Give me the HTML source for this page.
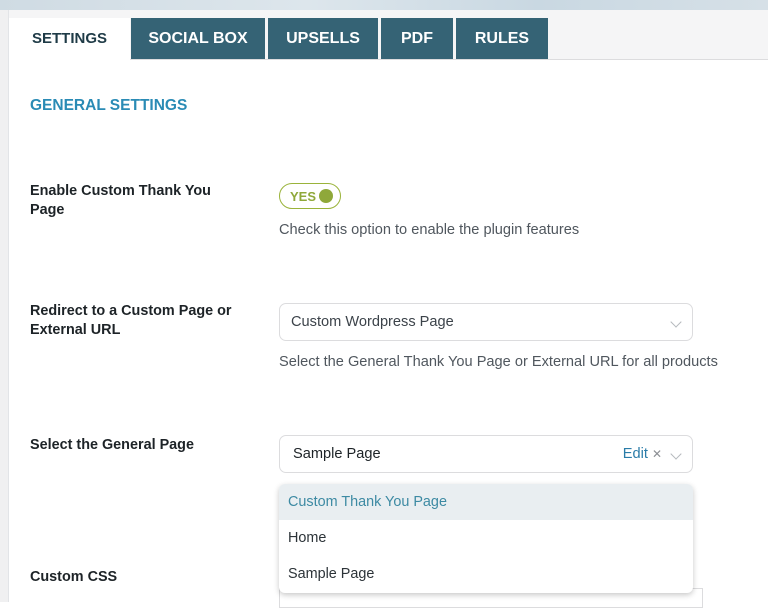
<!DOCTYPE html>
<html><head><style>
*{margin:0;padding:0;box-sizing:border-box}
body{width:768px;height:602px;overflow:hidden;background:#fff;font-family:"Liberation Sans",sans-serif;position:relative}
.top{position:absolute;left:0;top:0;width:768px;height:10px;background:linear-gradient(90deg,#cfdbe3,#dde6ec 40%,#c9d8e2 70%,#d6e0e7)}
.strip{position:absolute;left:0;top:10px;width:9px;height:592px;background:#f0f0f1;border-right:1px solid #e2e4e7}
.tabbar{position:absolute;left:9px;top:10px;width:759px;height:50px;background:#f5f5f6;border-bottom:1px solid #dcdcde}
.tab{position:absolute;top:18px;height:41px;background:#356375;color:#fff;font-weight:bold;font-size:16px;line-height:42px;text-align:center}
.tab.active{background:#fff;color:#1f3b47;height:42px;font-size:15px}
.abs{position:absolute}
.lbl{position:absolute;left:30px;font-size:14.4px;font-weight:bold;color:#1d2327;line-height:19px}
.desc{position:absolute;left:279px;font-size:14.6px;color:#50575e}
.sel{position:absolute;left:279px;width:414px;height:38px;border:1px solid #dcdcde;border-radius:7px;background:#fff;font-size:14.6px;color:#3c434a;padding-left:11px;line-height:37px}
.chev{position:absolute;right:12px;top:14px;width:8px;height:8px;border-right:1px solid #b5b9bd;border-bottom:1px solid #b5b9bd;transform:rotate(45deg)}
</style></head><body>
<div class="top"></div>
<div class="strip"></div>
<div class="tabbar"></div>
<div class="tab active" style="left:9px;width:121px">SETTINGS</div>
<div class="tab" style="left:131px;width:134px">SOCIAL BOX</div>
<div class="tab" style="left:268px;width:110px">UPSELLS</div>
<div class="tab" style="left:381px;width:72px">PDF</div>
<div class="tab" style="left:456px;width:92px">RULES</div>
<div class="abs" style="left:30px;top:97px;font-size:15.5px;font-weight:bold;color:#2a8bb5">GENERAL SETTINGS</div>

<div class="lbl" style="top:182px">Enable Custom Thank You<br>Page</div>
<div class="abs" style="left:279px;top:183px;width:62px;height:26px;border:1.5px solid #9ab33a;border-radius:13px"></div>
<div class="abs" style="left:290px;top:189px;font-size:13px;font-weight:bold;color:#8fa83a">YES</div>
<div class="abs" style="left:319px;top:189px;width:14px;height:14px;border-radius:50%;background:#8fa83a"></div>
<div class="desc" style="top:222px">Check this option to enable the plugin features</div>

<div class="lbl" style="top:302px">Redirect to a Custom Page or<br>External URL</div>
<div class="sel" style="top:303px">Custom Wordpress Page<div class="chev"></div></div>
<div class="desc" style="top:354px">Select the General Thank You Page or External URL for all products</div>

<div class="lbl" style="top:436px">Select the General Page</div>
<div class="sel" style="top:435px;color:#1d2327;padding-left:13px">Sample Page
<span class="abs" style="right:30px;top:0;color:#2a7ca8">Edit <span style="color:#8c8f94;font-size:12px">✕</span></span><div class="chev"></div></div>

<div class="lbl" style="top:568px">Custom CSS</div>
<div class="abs" style="left:279px;top:588px;width:424px;height:20px;border:1px solid #dcdcde"></div>
<div class="abs" style="left:279px;top:484px;width:414px;height:109px;background:#fff;border-radius:6px;box-shadow:0 2px 6px rgba(0,0,0,.22);overflow:hidden;font-size:14.4px">
<div style="height:36px;background:#e9eef1;color:#3d8aa3;padding-left:9px;line-height:36px">Custom Thank You Page</div>
<div style="height:36px;color:#2c3338;padding-left:9px;line-height:36px">Home</div>
<div style="height:36px;color:#2c3338;padding-left:9px;line-height:36px">Sample Page</div>
</div>
</body></html>
